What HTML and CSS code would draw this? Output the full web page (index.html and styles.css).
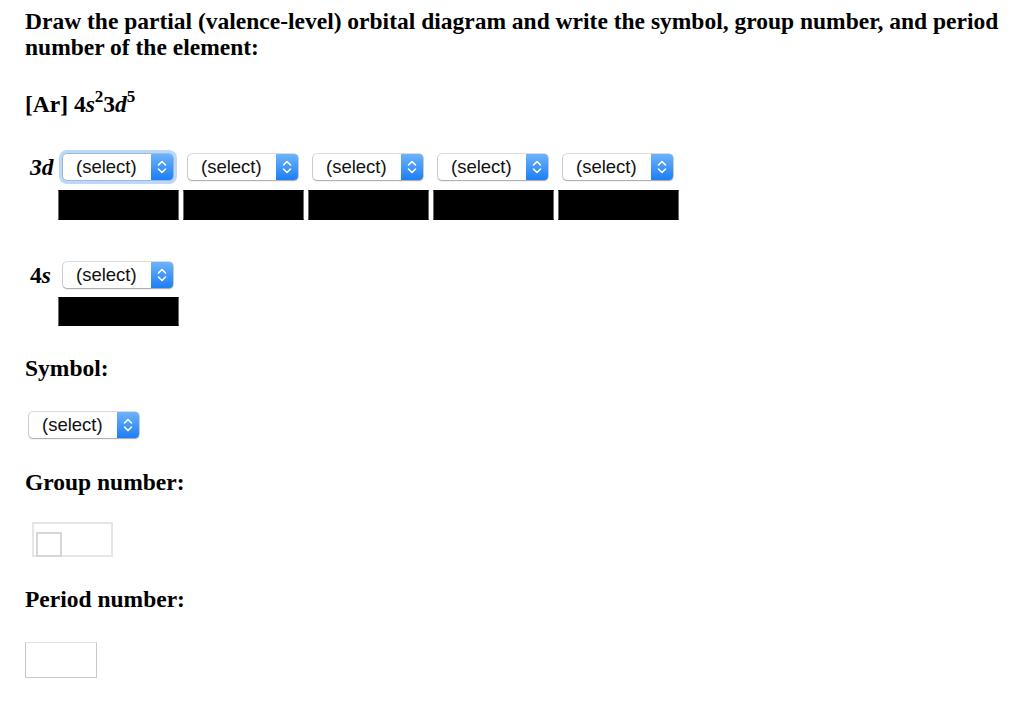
FILE: index.html
```html
<!DOCTYPE html>
<html>
<head>
<meta charset="utf-8">
<link rel="stylesheet" href="styles.css">
</head>
<body>
<div class="page">
  <p class="title">Draw the partial (valence-level) orbital diagram and write the symbol, group number, and period number of the element:</p>
  <p class="config">[Ar] 4<i>s</i><sup>2</sup>3<i>d</i><sup>5</sup></p>

  <div class="orb-row row-3d">
    <div class="orb-label"><i>3d</i></div>
    <div class="orb-boxes">
      <div class="orbital">
        <div class="sel focused"><span class="sel-text">(select)</span><span class="sel-btn"><svg width="22" height="26" viewBox="0 0 22 26"><path d="M7.5 11 L11 7.5 L14.5 11 M7.5 15 L11 18.5 L14.5 15" fill="none" stroke="#fff" stroke-width="1.6" stroke-linecap="round" stroke-linejoin="round"/></svg></span></div>
        <div class="box"></div>
      </div>
      <div class="orbital">
        <div class="sel"><span class="sel-text">(select)</span><span class="sel-btn"><svg width="22" height="26" viewBox="0 0 22 26"><path d="M7.5 11 L11 7.5 L14.5 11 M7.5 15 L11 18.5 L14.5 15" fill="none" stroke="#fff" stroke-width="1.6" stroke-linecap="round" stroke-linejoin="round"/></svg></span></div>
        <div class="box"></div>
      </div>
      <div class="orbital">
        <div class="sel"><span class="sel-text">(select)</span><span class="sel-btn"><svg width="22" height="26" viewBox="0 0 22 26"><path d="M7.5 11 L11 7.5 L14.5 11 M7.5 15 L11 18.5 L14.5 15" fill="none" stroke="#fff" stroke-width="1.6" stroke-linecap="round" stroke-linejoin="round"/></svg></span></div>
        <div class="box"></div>
      </div>
      <div class="orbital">
        <div class="sel"><span class="sel-text">(select)</span><span class="sel-btn"><svg width="22" height="26" viewBox="0 0 22 26"><path d="M7.5 11 L11 7.5 L14.5 11 M7.5 15 L11 18.5 L14.5 15" fill="none" stroke="#fff" stroke-width="1.6" stroke-linecap="round" stroke-linejoin="round"/></svg></span></div>
        <div class="box"></div>
      </div>
      <div class="orbital">
        <div class="sel"><span class="sel-text">(select)</span><span class="sel-btn"><svg width="22" height="26" viewBox="0 0 22 26"><path d="M7.5 11 L11 7.5 L14.5 11 M7.5 15 L11 18.5 L14.5 15" fill="none" stroke="#fff" stroke-width="1.6" stroke-linecap="round" stroke-linejoin="round"/></svg></span></div>
        <div class="box"></div>
      </div>
    </div>
  </div>

  <div class="orb-row row-4s">
    <div class="orb-label">4<i>s</i></div>
    <div class="orb-boxes">
      <div class="orbital">
        <div class="sel"><span class="sel-text">(select)</span><span class="sel-btn"><svg width="22" height="26" viewBox="0 0 22 26"><path d="M7.5 11 L11 7.5 L14.5 11 M7.5 15 L11 18.5 L14.5 15" fill="none" stroke="#fff" stroke-width="1.6" stroke-linecap="round" stroke-linejoin="round"/></svg></span></div>
        <div class="box"></div>
      </div>
    </div>
  </div>

  <p class="label label-symbol">Symbol:</p>
  <div class="sel sel-symbol"><span class="sel-text">(select)</span><span class="sel-btn"><svg width="22" height="26" viewBox="0 0 22 26"><path d="M7.5 11 L11 7.5 L14.5 11 M7.5 15 L11 18.5 L14.5 15" fill="none" stroke="#fff" stroke-width="1.6" stroke-linecap="round" stroke-linejoin="round"/></svg></span></div>

  <p class="label label-group">Group number:</p>
  <div class="group-input"><span class="group-inner"></span></div>

  <p class="label label-period">Period number:</p>
  <div class="period-input"></div>
</div>
</body>
</html>
```

FILE: styles.css
```css
html, body {
  margin: 0;
  padding: 0;
  background: #fff;
}

.page {
  padding: 8px 0 0 25px;
  font-family: "Liberation Serif", "Times New Roman", serif;
  font-size: 23.5px;
  line-height: 26px;
  font-weight: bold;
  color: #000;
}

p {
  margin: 0;
}

.title {
  width: 992px;
}

.config {
  margin-top: 31px;
}

.config sup {
  font-size: 17px;
  line-height: 0;
  vertical-align: 10px;
}

.orb-row {
  display: flex;
  align-items: flex-start;
}

.row-3d {
  margin-top: 37px;
}

.row-4s {
  margin-top: 42px;
}

.orb-label {
  width: 28px;
  padding-left: 5px;
  line-height: 26px;
}

.orb-boxes {
  display: flex;
  gap: 4px;
}

.orbital {
  display: flex;
  flex-direction: column;
  width: 121px;
}

.orbital .sel {
  margin-left: 5px;
}

.box {
  margin-top: 10px;
  width: 121px;
  height: 30px;
  box-sizing: border-box;
  background: #000;
  border: 1px solid #6a6a6a;
  border-top-color: #000;
  border-bottom-color: #000;
}

.row-4s .box {
  margin-top: 9px;
  height: 29px;
}

.sel {
  display: flex;
  width: 110px;
  height: 26px;
  border-radius: 4px;
  background: #fff;
  box-shadow: 0 0 0 0.6px rgba(0, 0, 0, 0.28), 0 1px 1.5px rgba(0, 0, 0, 0.25);
  font-family: "Liberation Sans", Arial, sans-serif;
  font-weight: normal;
  font-size: 18.5px;
  line-height: 26px;
  color: #111;
  overflow: hidden;
}

.sel.focused {
  box-shadow: 0 0 0 0.6px rgba(0, 0, 0, 0.28), 0 0 0 4px #bcd8f8;
}

.sel-text {
  flex: 1;
  padding-left: 13px;
}

.sel-btn {
  width: 22px;
  height: 26px;
  background: linear-gradient(#6db3fb, #1d7ef6);
  display: flex;
}

.label-symbol {
  margin-top: 29px;
}

.sel-symbol {
  margin-top: 31px;
  margin-left: 4px;
}

.label-group {
  margin-top: 31px;
}

.group-input {
  margin-top: 27px;
  margin-left: 7px;
  width: 81px;
  height: 35px;
  box-sizing: border-box;
  border: 2px solid #e6e6e6;
  display: flex;
  align-items: flex-end;
  padding-left: 2px;
}

.group-inner {
  width: 26px;
  height: 25px;
  box-sizing: border-box;
  border: 2px solid #d6d6d6;
  margin-bottom: -2px;
}

.label-period {
  margin-top: 29px;
}

.period-input {
  margin-top: 30px;
  width: 72px;
  height: 36px;
  box-sizing: border-box;
  border: 1px solid #c8c8c8;
  border-top-color: #e2e2e2;
}
```
